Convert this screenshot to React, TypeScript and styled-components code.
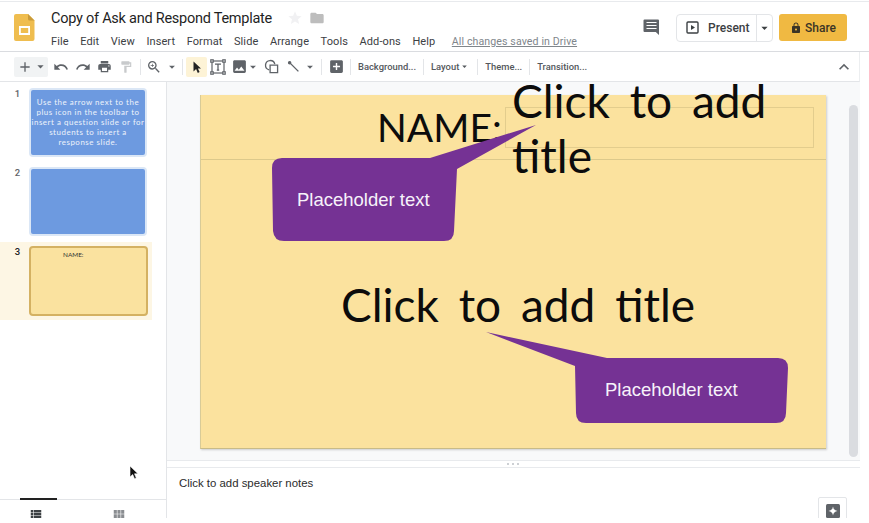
import React from "react";
import styled, { createGlobalStyle } from "styled-components";
import {
  MdAdd, MdArrowDropDown, MdUndo, MdRedo, MdPrint, MdFormatPaint, MdZoomIn, MdImage,
  MdAddBox, MdExpandLess, MdLock, MdStar, MdFolder, MdViewList, MdViewModule,
} from "react-icons/md";

const Global = createGlobalStyle`
  html, body { margin: 0; padding: 0; background: #fff; overflow: hidden; }
  * { box-sizing: border-box; }
`;

const hand = `"Lato", "Open Sans", sans-serif`;
const ui = `"Roboto", "Liberation Sans", sans-serif`;

const Page = styled.div`
  width: 869px; height: 518px; display: flex; flex-direction: column; overflow: hidden;
  position: relative; font-family: ${ui}; color: #3c4043; padding-top: 1px;
`;
const Header = styled.header`
  height: 51px; flex: none; display: flex; align-items: flex-start; border-top: 1px solid #e8eaed;
  border-bottom: 1px solid #dadce0; padding: 5px 22px 0 14px; width: 869px;
`;
const DocLogo = styled.svg`width: 21px; height: 29px; flex: none; margin: 6px 16px 0 0;`;
const TitleBlock = styled.div`display: flex; flex-direction: column; flex: 1;`;
const TitleRow = styled.div`display: flex; align-items: center; height: 22px;`;
const DocTitle = styled.div`font-size: 14.5px; color: #1f1f1f; letter-spacing: -.25px; margin-left: 0;`;
const StarIcon = styled(MdStar)`color: #f1f1f3; margin-left: 15px; width: 16px; height: 16px;`;
const FolderIcon = styled(MdFolder)`color: #bdbdbd; margin-left: 6px; width: 16px; height: 16px;`;
const MenuRow = styled.nav`display: flex; align-items: center; gap: 11.5px; font-size: 11px; margin-top: 4px; height: 16px; color: #3c4043; letter-spacing: .1px;`;
const SaveLink = styled.span`margin-left: 5px; color: #80868b; text-decoration: underline; font-size: 10.6px;`;
const RightTools = styled.div`display: flex; align-items: center; height: 27px; margin-top: 7px;`;
const Comment = styled.svg`width: 18px; height: 18px; margin-right: 15px; margin-top: -2px;`;
const PresentGroup = styled.div`
  display: flex; width: 97px; height: 28px; border: 1px solid #e3e5e8; border-radius: 4px; margin-right: 6px;
`;
const PresentMain = styled.div`
  flex: 1; display: flex; align-items: center; gap: 9px; padding-left: 9px; font-size: 12px; font-weight: 500; color: #3c4043;
  border-right: 1px solid #e3e5e8;
`;
const PresentCaret = styled.div`width: 15px; display: flex; align-items: center; justify-content: center; color: #3c4043;`;
const ShareButton = styled.div`
  width: 68px; height: 27px; background: #f0b942; border-radius: 3px; display: flex; align-items: center; justify-content: center;
  gap: 3px; font-size: 12px; font-weight: 500; color: #3b3426;
`;
const Toolbar = styled.div`
  height: 30px; flex: none; width: 860px; display: flex; align-items: center; padding-left: 14px; color: #5f6368;
  border-bottom: 1px solid #e3e5e8; border-right: 1px solid #eceef0;
`;
const AddGroup = styled.div`width: 34px; height: 20px; background: #f1f3f4; border-radius: 2px; display: flex; align-items: center; margin-right: 3px; padding-left: 3px; flex: none;`;
const ToolIcon = styled.div<{ $w?: number; $tone?: string; $active?: boolean }>`
  width: ${p => p.$w ?? 22}px; height: 20px; display: flex; align-items: center; justify-content: center; flex: none;
  color: ${p => p.$tone ?? "#5f6368"}; background: ${p => (p.$active ? "#fdf3d6" : "transparent")}; border-radius: 2px;
  & > svg { flex: none; }
`;
const Sep = styled.div<{ $mx?: number }>`width: 1px; height: 16px; background: #e3e5e8; margin: 0 ${p => p.$mx ?? 3}px; flex: none;`;
const ToolText = styled.div`font-size: 9.4px; font-weight: 500; color: #54585c; white-space: nowrap; display: flex; align-items: center; padding: 0 4px;`;
const Collapse = styled.div`margin-left: auto; margin-right: 5px; display: flex; color: #5f6368;`;
const Main = styled.div`flex: 1; display: flex; min-height: 0; width: 860px;`;
const Side = styled.aside`width: 167px; flex: none; border-right: 1px solid #e3e5e8; display: flex; flex-direction: column;`;
const ThumbList = styled.div`flex: 1; padding-top: 6px; display: flex; flex-direction: column; gap: 10px;`;
const ThumbRow = styled.div<{ $active?: boolean }>`
  width: 152px; display: flex; align-items: center; padding: ${p => (p.$active ? "4px 4px 4px 0" : "0 5px 0 0")};
  height: ${p => (p.$active ? 78 : 69)}px; background: ${p => (p.$active ? "#fdf6e4" : "transparent")};
  margin-top: ${p => (p.$active ? -4 : 0)}px;
`;
const ThumbNum = styled.div<{ $active?: boolean }>`
  width: 29px; align-self: flex-start; text-align: center; padding-left: 6px; font-size: 9.5px; font-weight: 500; line-height: 12px; color: ${p => (p.$active ? "#202124" : "#5f6368")};
`;
const Thumb = styled.div<{ $active?: boolean }>`
  flex: 1; height: 100%; border-radius: 4px; padding: 3px 0;
  background: ${p => (p.$active ? "#fae29f" : "#6d9ae0")}; border: 2px solid ${p => (p.$active ? "#d4b162" : "#dbe7f6")};
  font-family: ${hand}; overflow: hidden; line-height: 9.9px;
`;
const ThumbCopy = styled.div`color: #eef3fb; font-size: 7.9px; letter-spacing: .55px; text-align: center; white-space: nowrap; padding-top: 5px; margin: 0 -6px;`;
const ThumbName = styled.div`color: #333; font-size: 6.4px; padding-left: 32px; margin-top: -1px;`;
const SideTabs = styled.div`height: 19px; flex: none; border-top: 1px solid #e3e5e8; display: flex; position: relative;`;
const SideTab = styled.div<{ $on?: boolean; $w: number }>`
  width: ${p => p.$w}px; display: flex; justify-content: center; padding-top: 7px; color: ${p => (p.$on ? "#3c4043" : "#8a8d91")};
`;
const TabMark = styled.div`position: absolute; left: 20px; top: -2px; width: 37px; height: 2px; background: #222;`;
const Editor = styled.div`flex: 1; display: flex; flex-direction: column; min-width: 0;`;
const Canvas = styled.div`
  height: 378px; background: #f8f9fa; display: flex; position: relative; padding: 13px 0 0 33px; flex: none;
`;
const Slide = styled.div`
  width: 626px; height: 354px; background: #fbe29e; position: relative; flex: none; border-left: 1px solid #d8cb97;
  border-bottom: 1px solid #c8bb88; box-shadow: 1px 1px 2px rgba(0,0,0,.18);
`;
const TitleBox = styled.div`position: absolute; left: 304px; top: 12px; width: 309px; height: 41px; border: 1px solid #e3cd8d;`;
const HRule = styled.div`position: absolute; left: 0; right: 0; top: 64px; height: 1px; background: #dcc98b;`;
const HandText = styled.div<{ $size: number }>`
  position: absolute; font-family: ${hand}; font-weight: 400; font-size: ${p => p.$size}px; word-spacing: 8px; color: #0c0c0c; white-space: nowrap; line-height: 1;
`;
const CalloutShape = styled.svg`position: absolute; left: -1px; top: 0; width: 627px; height: 353px; overflow: visible;`;
const CalloutLabel = styled.div`position: absolute; font-family: "Liberation Sans", sans-serif; font-size: 18.5px; color: #f7f2fa; white-space: nowrap;`;
const Scrollbar = styled.div`position: absolute; right: 2px; top: 23px; width: 9px; height: 352px; background: #dadce0; border-radius: 5px;`;
const Resize = styled.div`
  height: 8px; flex: none; background: #fff; border-top: 1px solid #e8eaed; border-bottom: 1px solid #e8eaed; display: flex; justify-content: center; align-items: center; gap: 3px; padding-right: 2px;
`;
const Dot = styled.span`width: 2px; height: 2px; background: #bdc1c6; border-radius: 50%;`;
const Notes = styled.div`flex: 1; position: relative; padding: 7px 12px; font-family: "Liberation Sans", sans-serif; font-size: 11.4px; color: #2b2b2b; line-height: 16px;`;
const ExploreBtn = styled.div`
  position: absolute; right: 13px; top: 29px; width: 29px; height: 26px; border: 1px solid #e3e5e8; border-radius: 2px; display: flex; justify-content: center; padding-top: 6px;
`;
const Pointer = styled.svg`position: absolute; left: 129px; top: 465px; width: 10px; height: 15px;`;

const TextBoxIcon = () => (
  <svg width="16" height="16" viewBox="0 0 16 16" fill="none" stroke="#5f6368" strokeWidth="1.2">
    <rect x="2" y="2" width="12" height="12" />
    <rect x="0.8" y="0.8" width="2.4" height="2.4" fill="#fff" /><rect x="12.8" y="0.8" width="2.4" height="2.4" fill="#fff" />
    <rect x="0.8" y="12.8" width="2.4" height="2.4" fill="#fff" /><rect x="12.8" y="12.8" width="2.4" height="2.4" fill="#fff" />
    <path d="M5 5.2h6M8 5.2v6M6.8 11.2h2.4" strokeWidth="1.3" />
  </svg>
);
const ShapeIcon = () => (
  <svg width="15" height="15" viewBox="0 0 16 16" fill="none" stroke="#5f6368" strokeWidth="1.4">
    <path d="M5.5 11.500A5 5 0 1 1 11.500 5.500" />
    <path d="M6.500 6.500h8v8h-8z" />
  </svg>
);
const LineIcon = () => (
  <svg width="14" height="14" viewBox="0 0 16 16" stroke="#5f6368" strokeWidth="1.6" fill="#5f6368">
    <path d="M3 3l10 10" /><circle cx="3" cy="3" r="1.2" />
  </svg>
);
const CursorIcon = () => (
  <svg width="14" height="14" viewBox="0 0 14 14"><path d="M3.5 1.5v10l2.6-2.4 1.7 3.8 1.8-.8-1.7-3.7H11z" fill="#222" /></svg>
);
const PresentIcon = () => (
  <svg width="13" height="13" viewBox="0 0 13 13" fill="none" stroke="#3c4043" strokeWidth="1.4">
    <rect x="1" y="1" width="11" height="11" rx="1" /><path d="M5 4l4 2.5L5 9z" fill="#3c4043" stroke="none" />
  </svg>
);

export default function App() {
  return (
    <Page>
      <Global />
      <Header>
        <DocLogo viewBox="0 0 21 29">
          <path d="M2 1h12l6.5 6.5V26a2 2 0 0 1-2 2H2a2 2 0 0 1-2-2V3a2 2 0 0 1 2-2z" fill="#efbd4f" />
          <path d="M14 1l6.5 6.5H15.5A1.5 1.5 0 0 1 14 6z" fill="#c99b3a" />
          <path d="M5 13h11v9H5z" fill="#fff" /><path d="M6.8 15h7.4v5H6.8z" fill="#efbd4f" />
        </DocLogo>
        <TitleBlock>
          <TitleRow>
            <DocTitle>Copy of Ask and Respond Template</DocTitle>
            <StarIcon />
            <FolderIcon />
          </TitleRow>
          <MenuRow>
            <span>File</span><span>Edit</span><span>View</span><span>Insert</span><span>Format</span><span>Slide</span>
            <span>Arrange</span><span>Tools</span><span>Add-ons</span><span>Help</span>
            <SaveLink>All changes saved in Drive</SaveLink>
          </MenuRow>
        </TitleBlock>
        <RightTools>
          <Comment viewBox="0 0 18 18"><path d="M1.5 1.5h13.5a1 1 0 0 1 1 1V17l-3.2-3H1.5a1 1 0 0 1-1-1V2.500a1 1 0 0 1 1-1z" fill="#5f6368" /><path d="M3.500 4.500h10M3.500 7.500h10M3.500 10.500h10" stroke="#fff" strokeWidth="1.200" /></Comment>
          <PresentGroup>
            <PresentMain><PresentIcon />Present</PresentMain>
            <PresentCaret><MdArrowDropDown size={16} /></PresentCaret>
          </PresentGroup>
          <ShareButton><MdLock size={12} />Share</ShareButton>
        </RightTools>
      </Header>
      <Toolbar>
        <AddGroup><MdAdd size={16} /><MdArrowDropDown size={15} /></AddGroup>
        <ToolIcon $w={20}><MdUndo size={16} /></ToolIcon>
        <ToolIcon $w={23}><MdRedo size={16} /></ToolIcon>
        <ToolIcon $w={20}><MdPrint size={15} /></ToolIcon>
        <ToolIcon $w={24} $tone="#c8cacc"><MdFormatPaint size={14} /></ToolIcon>
        <Sep $mx={2} />
        <ToolIcon $w={22}><MdZoomIn size={16} /></ToolIcon>
        <ToolIcon $w={14}><MdArrowDropDown size={14} /></ToolIcon>
        <Sep />
        <ToolIcon $w={21} $active><CursorIcon /></ToolIcon>
        <ToolIcon $w={22}><TextBoxIcon /></ToolIcon>
        <ToolIcon $w={20}><MdImage size={17} /></ToolIcon>
        <ToolIcon $w={7}><MdArrowDropDown size={14} /></ToolIcon>
        <ToolIcon $w={30}><ShapeIcon /></ToolIcon>
        <ToolIcon $w={16}><LineIcon /></ToolIcon>
        <ToolIcon $w={16}><MdArrowDropDown size={14} /></ToolIcon>
        <Sep />
        <ToolIcon $w={22}><MdAddBox size={17} /></ToolIcon>
        <Sep />
        <ToolText>Background...</ToolText>
        <Sep />
        <ToolText>Layout<MdArrowDropDown size={11} /></ToolText>
        <Sep />
        <ToolText>Theme...</ToolText>
        <Sep />
        <ToolText>Transition...</ToolText>
        <Collapse><MdExpandLess size={20} /></Collapse>
      </Toolbar>
      <Main>
        <Side>
          <ThumbList>
            <ThumbRow>
              <ThumbNum>1</ThumbNum>
              <Thumb>
                <ThumbCopy>Use the arrow next to the<br />plus icon in the toolbar to<br />insert a question slide or for<br />students to insert a<br />response slide.</ThumbCopy>
              </Thumb>
            </ThumbRow>
            <ThumbRow>
              <ThumbNum>2</ThumbNum>
              <Thumb />
            </ThumbRow>
            <ThumbRow $active>
              <ThumbNum $active>3</ThumbNum>
              <Thumb $active><ThumbName>NAME:</ThumbName></Thumb>
            </ThumbRow>
          </ThumbList>
          <SideTabs>
            <TabMark />
            <SideTab $on $w={74}><MdViewList size={14} /></SideTab>
            <SideTab $w={96}><MdViewModule size={14} /></SideTab>
          </SideTabs>
        </Side>
        <Editor>
          <Canvas>
            <Slide>
              <HRule />
              <TitleBox />
              <HandText $size={39} style={{ left: 176, top: 13 }}>NAME:</HandText>
              <HandText $size={46} style={{ left: 311, top: -17 }}>Click to add</HandText>
              <HandText $size={46} style={{ left: 311, top: 38 }}>title</HandText>
              <HandText $size={46} style={{ left: 140, top: 187 }}>Click to add title</HandText>
              <CalloutShape viewBox="0 0 627 353">
                <path d="M230 63L336 30L257 74L254 136Q254 146 244 146H84Q74 146 73 136L72 73Q72 63 82 63Z" fill="#753294" />
                <path d="M286 237L407 263H578Q588 263 588 273L586 318Q586 328 576 328H386Q376 328 376 318L375 271Z" fill="#753294" />
              </CalloutShape>
              <CalloutLabel style={{ left: 96, top: 94 }}>Placeholder text</CalloutLabel>
              <CalloutLabel style={{ left: 404, top: 284 }}>Placeholder text</CalloutLabel>
            </Slide>
            <Scrollbar />
          </Canvas>
          <Resize><Dot /><Dot /><Dot /></Resize>
          <Notes>
            Click to add speaker notes
            <ExploreBtn>
              <svg width="14" height="14" viewBox="0 0 14 14"><rect width="14" height="14" rx="1.500" fill="#5f6368" /><path d="M7 2.500Q7.500 6.500 11.500 7Q7.500 7.500 7 11.500Q6.500 7.500 2.500 7Q6.500 6.500 7 2.500z" fill="#fff" /></svg>
            </ExploreBtn>
          </Notes>
        </Editor>
      </Main>
      <Pointer viewBox="0 0 10 15"><path d="M1 1v11l2.700-2.500 1.800 4.200 1.800-.8-1.800-4.100H9z" fill="#111" stroke="#fff" strokeWidth=".6" /></Pointer>
    </Page>
  );
}
